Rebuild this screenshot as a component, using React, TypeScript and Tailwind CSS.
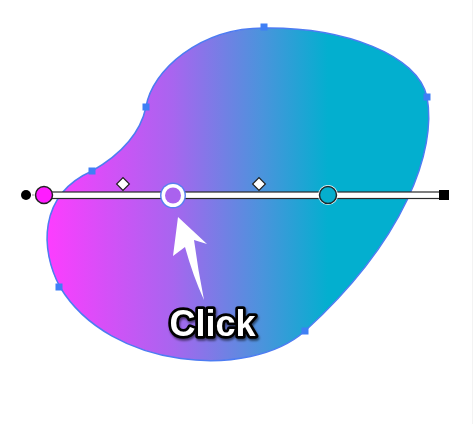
import React from 'react'

// gradient editor demo: blob with a gradient bar laid over it
const anchors: [number, number][] = [
  [264, 27],
  [427, 97],
  [146, 107],
  [92, 171],
  [59, 287],
  [305, 331],
]

export default function App() {
  return (
    <div className="w-[474px] h-[424px] bg-white overflow-hidden">
      <svg width="474" height="424" viewBox="0 0 474 424" className="block">
        <defs>
          <linearGradient id="fill" gradientUnits="userSpaceOnUse" x1="44" y1="0" x2="328" y2="0">
            <stop offset="0" stopColor="#ff3cff" />
            <stop offset="0.454" stopColor="#a865ef" />
            <stop offset="0.77" stopColor="#4a94dc" />
            <stop offset="1" stopColor="#03afcf" />
          </linearGradient>
          <filter id="shadow" x="-20%" y="-30%" width="140%" height="160%">
            <feDropShadow dx="1" dy="2" stdDeviation="1.2" floodColor="#000" floodOpacity="0.55" />
          </filter>
        </defs>

        {/* blob */}
        <path
          d="M 264 28 C 345 27, 418 55, 427 97 C 437 150, 405 240, 305 331 C 250 380, 110 370, 60 287 C 40 250, 38 195, 92 171 C 120 155, 140 135, 146 107 C 152 70, 200 28, 264 28 Z"
          fill="url(#fill)"
          stroke="#4d7cf2"
          strokeWidth="1.5"
        />
        {anchors.map(([x, y], i) => (
          <rect key={i} x={x - 3.5} y={y - 3.5} width="7" height="7" fill="#3f7ff5" />
        ))}

        {/* gradient bar */}
        <line x1="30" y1="195" x2="40" y2="195" stroke="#333" strokeWidth="1" strokeDasharray="1 1.5" />
        <circle cx="26" cy="195" r="5" fill="#000" />
        <rect x="44" y="192" width="400" height="6.5" fill="#fff" stroke="#2a2a2a" strokeWidth="1.2" />
        <rect x="439" y="190" width="10" height="10" fill="#000" />

        {/* midpoint diamonds */}
        <rect x="118.5" y="179.5" width="9" height="9" fill="#fff" stroke="#222" strokeWidth="1.2" transform="rotate(45 123 184)" />
        <rect x="254.5" y="179.5" width="9" height="9" fill="#fff" stroke="#222" strokeWidth="1.2" transform="rotate(45 259 184)" />

        {/* stops */}
        <circle cx="44" cy="195" r="8.5" fill="#ff1cff" stroke="#222" strokeWidth="1.5" />
        <circle cx="173" cy="195.5" r="13" fill="#5a7ef0" />
        <circle cx="173" cy="195.5" r="11.5" fill="#fff" />
        <circle cx="173" cy="195.5" r="8" fill="#aa62ee" />
        <circle cx="328" cy="195" r="10" fill="#fff" />
        <circle cx="328" cy="195" r="8.5" fill="#05aecd" stroke="#1c2b2e" strokeWidth="1.5" />

        {/* pointer arrow */}
        <path
          d="M 178 217 L 207 244 L 194 240 Q 198 270 204 300 Q 193 276 185 247 L 173 256 Z"
          fill="#fff"
        />

        {/* label */}
        <text
          x="212.5"
          y="336"
          textAnchor="middle"
          fontFamily="'Liberation Sans', Arial, sans-serif"
          fontWeight="700"
          fontSize="36"
          fill="#fff"
          stroke="#000"
          strokeWidth="5.5"
          strokeLinejoin="round"
          paintOrder="stroke"
          filter="url(#shadow)"
        >
          Click
        </text>

        <line x1="472.5" y1="0" x2="472.5" y2="424" stroke="#f3f3f3" strokeWidth="1" />
      </svg>
    </div>
  )
}
